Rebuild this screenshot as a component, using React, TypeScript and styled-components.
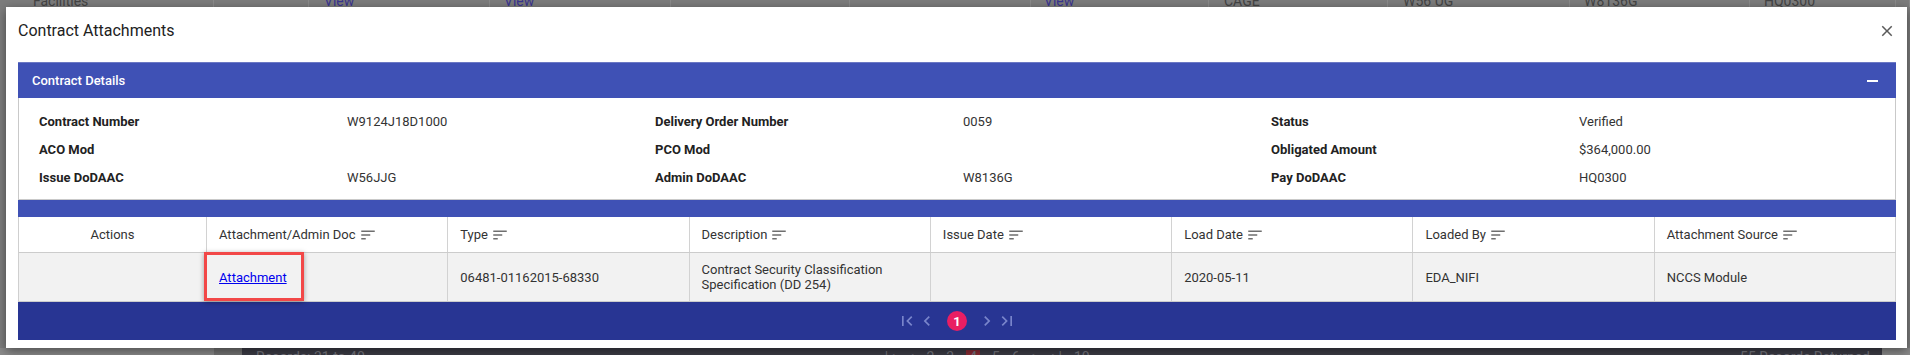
import React from "react";
import styled, { createGlobalStyle } from "styled-components";
import { MdFirstPage, MdLastPage, MdChevronLeft, MdChevronRight, MdClose, MdSort } from "react-icons/md";

const GlobalStyle = createGlobalStyle`
  html, body { margin: 0; padding: 0; }
  body {
    font-family: Roboto, "Liberation Sans", Arial, sans-serif;
    background: #7e7e7e;
    width: 1910px;
    height: 355px;
    overflow: hidden;
  }
  * { box-sizing: border-box; }
`;

const Page = styled.div`
  position: relative;
  width: 1910px;
  height: 355px;
  overflow: hidden;
  background: #7e7e7e;
  display: flex;
  flex-direction: column;
  justify-content: space-between;
`;

const TopStrip = styled.div`
  display: flex;
  height: 7px;
  overflow: hidden;
  background: #7c7c7c;
`;

const TopCell = styled.div<{ $w: number; $pad: number; $link?: boolean }>`
  flex: 0 0 ${(p) => p.$w}px;
  height: 14px;
  margin-top: -6px;
  padding-left: ${(p) => p.$pad}px;
  border-right: 1px solid #8a8a8a;
  font-size: 14px;
  line-height: 14px;
  color: ${(p) => (p.$link ? "#3a3490" : "#444")};
  white-space: nowrap;
  overflow: hidden;
`;

const BottomStrip = styled.div`
  display: flex;
  height: 7px;
  overflow: hidden;
`;

const BottomGray = styled.div<{ $w: number; $tone: string }>`
  flex: 0 0 ${(p) => p.$w}px;
  background: ${(p) => p.$tone};
`;

const BottomDark = styled.div`
  flex: 1;
  background: #3c3c46;
  display: flex;
  justify-content: space-between;
  padding: 2px 12px 0 14px;
  font-size: 14px;
  line-height: 14px;
  color: #77777f;
  white-space: nowrap;
`;

const BottomPager = styled.div`
  display: flex;
  gap: 12px;
  margin-left: 520px;
`;

const BottomActive = styled.span`
  background: #8a2c35;
  padding: 0 3px;
`;

const Modal = styled.div`
  position: absolute;
  left: 6px;
  top: 7px;
  width: 1901px;
  height: 341px;
  background: #fff;
  box-shadow: 0 3px 10px rgba(0, 0, 0, 0.45);
  padding: 12px 11px 8px 12px;
  display: flex;
  flex-direction: column;
`;

const TitleRow = styled.div`
  height: 24px;
  margin-bottom: 19px;
  display: flex;
  align-items: center;
  justify-content: space-between;
`;

const Title = styled.h2`
  margin: 0;
  font-size: 16px;
  font-weight: 400;
  color: #212121;
  line-height: 24px;
`;

const CloseButton = styled.button`
  width: 18px;
  height: 18px;
  padding: 0;
  border: 0;
  background: none;
  color: #5a5a5a;
  display: flex;
  align-items: center;
  justify-content: center;
`;

const Panel = styled.section`
  border: 1px solid #c9c9c9;
  border-top: 0;
`;

const PanelHeader = styled.div`
  height: 36px;
  margin: 0 -1px;
  background: #3f51b5;
  display: flex;
  align-items: center;
  justify-content: space-between;
  padding: 0 18px 0 14px;
  color: #fff;
  border-top: 1px solid #6b78c4;
`;

const PanelTitle = styled.span`
  font-size: 13px;
  font-weight: 500;
`;

const CollapseBar = styled.span`
  width: 11px;
  height: 2px;
  background: #fff;
`;

const DetailsGrid = styled.div`
  display: grid;
  grid-template-columns: repeat(6, 308px);
  grid-auto-rows: 28px;
  padding: 9px 8px 8px 20px;
  align-items: center;
`;

const Label = styled.div`
  font-size: 13px;
  font-weight: 700;
  color: #222;
`;

const Value = styled.div`
  font-size: 13px;
  color: #333;
`;

const Table = styled.div`
  display: flex;
  flex-direction: column;
`;

const Toolbar = styled.div`
  height: 17px;
  background: #3f51b5;
`;

const Row = styled.div<{ $head?: boolean }>`
  display: grid;
  grid-template-columns: 188px repeat(7, 1fr);
  height: ${(p) => (p.$head ? 36 : 49)}px;
  background: ${(p) => (p.$head ? "#fff" : "#f2f2f2")};
  border-left: 1px solid #cfcfcf;
  border-bottom: 1px solid #cccccc;
`;

const Cell = styled.div<{ $center?: boolean }>`
  position: relative;
  display: flex;
  align-items: center;
  justify-content: ${(p) => (p.$center ? "center" : "flex-start")};
  padding: 0 12px;
  border-right: 1px solid #d2d2d2;
  font-size: 13px;
  line-height: 15px;
  color: #333;
`;

const SortIcon = styled(MdSort)`
  margin-left: 3px;
  color: #6f6f6f;
  flex: none;
`;

const Link = styled.a`
  color: #0000ee;
  text-decoration: underline;
  font-size: 13px;
`;

const Highlight = styled.span`
  position: absolute;
  left: -3px;
  top: -1px;
  width: 100px;
  height: 49px;
  border: 3px solid #f24848;
  box-shadow: 0 1px 5px rgba(0, 0, 0, 0.35);
  pointer-events: none;
`;

const Pager = styled.div`
  height: 38px;
  background: #283593;
  display: flex;
  align-items: center;
  justify-content: center;
  color: #7985cb;
`;

const PagerIcon = styled.span`
  width: 20px;
  height: 20px;
  display: flex;
  align-items: center;
  justify-content: center;
`;

const PageBubble = styled.span`
  width: 20px;
  height: 20px;
  margin: 0 10px;
  border-radius: 50%;
  background: #e91e63;
  color: #fff;
  font-size: 13px;
  font-weight: 700;
  display: flex;
  align-items: center;
  justify-content: center;
`;

const topCells: { w: number; pad: number; text: string; link?: boolean }[] = [
  { w: 214, pad: 33, text: "Facilities" },
  { w: 95, pad: 14, text: "" },
  { w: 181, pad: 15, text: "View", link: true },
  { w: 181, pad: 14, text: "View", link: true },
  { w: 179, pad: 14, text: "" },
  { w: 181, pad: 14, text: "" },
  { w: 178, pad: 13, text: "View", link: true },
  { w: 179, pad: 15, text: "CAGE" },
  { w: 182, pad: 15, text: "W56 UG" },
  { w: 180, pad: 14, text: "W8136G" },
  { w: 146, pad: 14, text: "HQ0300" },
  { w: 14, pad: 0, text: "" },
];

const details: [string, string][] = [
  ["Contract Number", "W9124J18D1000"],
  ["Delivery Order Number", "0059"],
  ["Status", "Verified"],
  ["ACO Mod", ""],
  ["PCO Mod", ""],
  ["Obligated Amount", "$364,000.00"],
  ["Issue DoDAAC", "W56JJG"],
  ["Admin DoDAAC", "W8136G"],
  ["Pay DoDAAC", "HQ0300"],
];

const headers = [
  "Attachment/Admin Doc",
  "Type",
  "Description",
  "Issue Date",
  "Load Date",
  "Loaded By",
  "Attachment Source",
];

export default function App() {
  return (
    <>
      <GlobalStyle />
      <Page>
        <TopStrip>
          {topCells.map((c, i) => (
            <TopCell key={i} $w={c.w} $pad={c.pad} $link={c.link}>
              {c.text}
            </TopCell>
          ))}
        </TopStrip>
        <BottomStrip>
          <BottomGray $w={214} $tone="#8b8b8b" />
          <BottomGray $w={28} $tone="#747474" />
          <BottomDark>
            <span>Records: 31 to 40</span>
            <BottomPager>
              <span>|&lt;</span>
              <span>&lt;</span>
              <span>2</span>
              <span>3</span>
              <BottomActive>4</BottomActive>
              <span>5</span>
              <span>6</span>
              <span>&gt;</span>
              <span>&gt;|</span>
              <span>10</span>
            </BottomPager>
            <span style={{ flex: 1 }} />
            <span>55 Records Returned</span>
          </BottomDark>
          <BottomGray $w={28} $tone="#8b8b8b" />
        </BottomStrip>

        <Modal>
          <TitleRow>
            <Title>Contract Attachments</Title>
            <CloseButton aria-label="Close">
              <MdClose size={18} />
            </CloseButton>
          </TitleRow>

          <Panel>
            <PanelHeader>
              <PanelTitle>Contract Details</PanelTitle>
              <CollapseBar />
            </PanelHeader>
            <DetailsGrid>
              {details.map(([label, value]) => (
                <React.Fragment key={label}>
                  <Label>{label}</Label>
                  <Value>{value}</Value>
                </React.Fragment>
              ))}
            </DetailsGrid>
          </Panel>

          <Table>
            <Toolbar />
            <Row $head>
              <Cell $center>Actions</Cell>
              {headers.map((h) => (
                <Cell key={h}>
                  {h}
                  <SortIcon size={18} />
                </Cell>
              ))}
            </Row>
            <Row>
              <Cell />
              <Cell>
                <Link href="#">Attachment</Link>
                <Highlight />
              </Cell>
              <Cell>06481-01162015-68330</Cell>
              <Cell>
                Contract Security Classification
                <br />
                Specification (DD 254)
              </Cell>
              <Cell />
              <Cell>2020-05-11</Cell>
              <Cell>EDA_NIFI</Cell>
              <Cell>NCCS Module</Cell>
            </Row>
            <Pager>
              <PagerIcon>
                <MdFirstPage size={20} />
              </PagerIcon>
              <PagerIcon>
                <MdChevronLeft size={20} />
              </PagerIcon>
              <PageBubble>1</PageBubble>
              <PagerIcon>
                <MdChevronRight size={20} />
              </PagerIcon>
              <PagerIcon>
                <MdLastPage size={20} />
              </PagerIcon>
            </Pager>
          </Table>
        </Modal>
      </Page>
    </>
  );
}
